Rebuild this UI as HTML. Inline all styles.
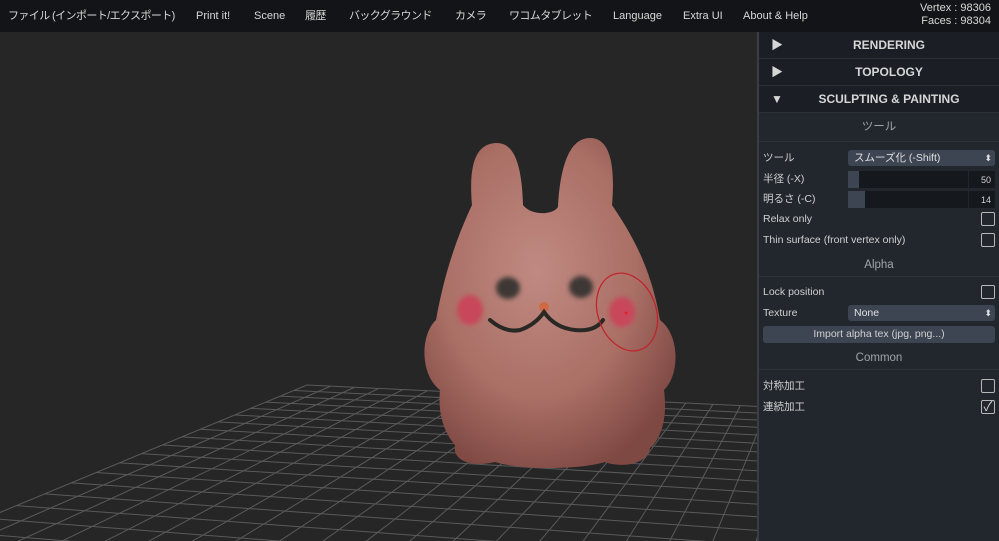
<!DOCTYPE html>
<html><head><meta charset="utf-8"><style>
*{margin:0;padding:0;box-sizing:border-box}
html,body{width:999px;height:541px;overflow:hidden}
body{background:#262626;font-family:"Liberation Sans","Noto Sans CJK JP",sans-serif;position:relative}
#top{position:absolute;left:0;top:0;width:999px;height:32px;background:#131417;color:#d8d8d8;font-size:11px}
#top span{position:absolute;top:0;line-height:32px;white-space:nowrap}
#top span.j{letter-spacing:-0.6px}
#stats{position:absolute;right:8px;top:2px;text-align:right;font-size:11px;line-height:13px;color:#d8d8d8}
#view{position:absolute;left:0;top:32px;width:757px;height:509px;overflow:hidden}
#panel{position:absolute;left:757px;top:32px;width:242px;height:509px;background:#22272e;border-left:2px solid #3a3d42;color:#d0d0d0;font-size:10.5px;overflow:hidden}
.hd{height:27px;background:#1b1f25;border-bottom:1px solid #2c3037;position:relative;font-weight:bold;font-size:12px;text-align:center;line-height:27px;color:#d6d6d6;padding-left:20px}
.hd i{position:absolute;left:12px;top:0;font-style:normal;font-size:12px}
.sec{text-align:center;color:#a0a4aa;font-size:11.5px;height:24px;line-height:24px;border-bottom:1px solid #2e333a}
.row{position:absolute;left:4px;right:4px;height:18px;line-height:18px}
.lab{position:absolute;left:0}
.sel{position:absolute;left:85px;right:0;top:1px;height:16px;background:#3d4553;border-radius:3px;padding-left:6px;line-height:16px;color:#e0e0e0}
.sel:after{content:"⬍";position:absolute;right:3px;font-size:9px}
.cb{position:absolute;right:0;top:2px;width:14px;height:14px;border:1px solid #b8b8b8;border-radius:2px}
.bar{position:absolute;left:85px;width:120px;top:1px;height:17px;background:#15181d}
.bar b{position:absolute;left:0;top:0;height:17px;background:#3d4553}
.num{position:absolute;right:0;width:26px;top:1px;height:17px;background:#15181d;text-align:right;padding-right:4px;font-size:9px}
</style></head><body>
<div id="view"><svg id="g" width="757" height="509" viewBox="0 32 757 509" style="position:absolute;left:0;top:0">
<defs>
<radialGradient id="sk" cx="0.45" cy="0.4" r="0.65"><stop offset="0" stop-color="#c08a82"/><stop offset="0.6" stop-color="#aa6f65"/><stop offset="1" stop-color="#7e4843"/></radialGradient>
<filter id="bl"><feGaussianBlur stdDeviation="2.5"/></filter>
</defs>
<g id="grid" stroke="#5a5a5a" stroke-width="1" fill="none"></g>
<path fill="url(#sk)" d="M472,205 C468,160 478,143 497,143 C516,143 522,170 523,205 C530,215 552,216 558,207 C560,170 568,138 590,138 C612,138 615,170 612,205 C625,225 650,260 660,320 C680,335 680,375 664,390 C668,420 660,440 650,448 C648,465 620,468 605,462 C580,470 520,470 495,462 C470,468 452,460 455,445 C442,430 438,410 440,390 C420,375 420,335 436,320 C445,270 458,235 472,205 Z"/>
<g filter="url(#bl)">
<ellipse cx="470" cy="310" rx="13" ry="15" fill="#c8465a"/>
<ellipse cx="622" cy="312" rx="13" ry="15" fill="#c8465a"/>
<ellipse cx="508" cy="288" rx="12" ry="11" fill="#3e3836"/>
<ellipse cx="581" cy="287" rx="12" ry="11" fill="#3e3836"/>
</g>
<circle cx="544" cy="307" r="5" fill="#d06a45"/>
<path d="M490 320 Q505 333 520 330 Q535 325 544 312 Q555 328 575 330 Q595 332 603 320" stroke="#2a2824" stroke-width="4" fill="none" stroke-linecap="round"/>
<ellipse cx="627" cy="312" rx="29" ry="40" transform="rotate(-20 627 312)" fill="none" stroke="#c0202a" stroke-width="1.2"/>
<circle cx="626" cy="313" r="1.5" fill="#e02030"/>
</svg></div>
<div id="top">
<span class="j" style="left:8px">ファイル (インポート/エクスポート)</span>
<span style="left:196px">Print it!</span>
<span style="left:254px">Scene</span>
<span class="j" style="left:305px">履歴</span>
<span class="j" style="left:349px">バックグラウンド</span>
<span class="j" style="left:455px">カメラ</span>
<span class="j" style="left:509px">ワコムタブレット</span>
<span style="left:613px">Language</span>
<span style="left:683px">Extra UI</span>
<span style="left:743px">About &amp; Help</span>
<div id="stats">Vertex : 98306<br>Faces : 98304</div>
</div>
<div id="panel">
<div class="hd"><i>▶</i>RENDERING</div>
<div class="hd"><i>▶</i>TOPOLOGY</div>
<div class="hd"><i>▼</i>SCULPTING &amp; PAINTING</div>
<div class="sec" style="height:29px;line-height:29px">ツール</div>
<div class="row" style="top:117px"><span class="lab">ツール</span><div class="sel">スムーズ化 (-Shift)</div></div>
<div class="row" style="top:138px"><span class="lab">半径 (-X)</span><div class="bar"><b style="width:11px"></b></div><div class="num">50</div></div>
<div class="row" style="top:158px"><span class="lab">明るさ (-C)</span><div class="bar"><b style="width:17px"></b></div><div class="num">14</div></div>
<div class="row" style="top:178px"><span class="lab">Relax only</span><div class="cb"></div></div>
<div class="row" style="top:199px"><span class="lab">Thin surface (front vertex only)</span><div class="cb"></div></div>
<div class="sec" style="position:absolute;top:221px;left:0;right:0">Alpha</div>
<div class="row" style="top:251px"><span class="lab">Lock position</span><div class="cb"></div></div>
<div class="row" style="top:272px"><span class="lab">Texture</span><div class="sel">None</div></div>
<div class="row" style="top:293px"><div style="position:absolute;left:0;right:0;top:1px;height:17px;background:#3d4553;border-radius:3px;text-align:center;line-height:17px">Import alpha tex (jpg, png...)</div></div>
<div class="sec" style="position:absolute;top:314px;left:0;right:0">Common</div>
<div class="row" style="top:345px"><span class="lab">対称加工</span><div class="cb"></div></div>
<div class="row" style="top:366px"><span class="lab">連続加工</span><div class="cb" style="text-align:center;line-height:12px;font-size:13px">✓</div></div>
</div>
<script>
var P=[[307,385],[1000,418],[1250,950],[-500,720]];
var x0=P[0][0],y0=P[0][1],x1=P[1][0],y1=P[1][1],x2=P[2][0],y2=P[2][1],x3=P[3][0],y3=P[3][1];
var dx1=x1-x2,dx2=x3-x2,dx3=x0-x1+x2-x3,dy1=y1-y2,dy2=y3-y2,dy3=y0-y1+y2-y3;
var den=dx1*dy2-dx2*dy1,g=(dx3*dy2-dx2*dy3)/den,h=(dx1*dy3-dx3*dy1)/den;
var a=x1-x0+g*x1,b=x3-x0+h*x3,d=y1-y0+g*y1,e=y3-y0+h*y3;
function m(u,v){var w=g*u+h*v+1;return [(a*u+b*v+x0)/w,(d*u+e*v+y0)/w];}
var N=26,s="";
for(var i=0;i<=N;i++){var t=i/N;var p=m(t,0),q=m(t,1);s+='<line x1="'+p[0]+'" y1="'+p[1]+'" x2="'+q[0]+'" y2="'+q[1]+'"/>';p=m(0,t);q=m(1,t);s+='<line x1="'+p[0]+'" y1="'+p[1]+'" x2="'+q[0]+'" y2="'+q[1]+'"/>';}
document.getElementById('grid').innerHTML=s;
</script>
</body></html>
